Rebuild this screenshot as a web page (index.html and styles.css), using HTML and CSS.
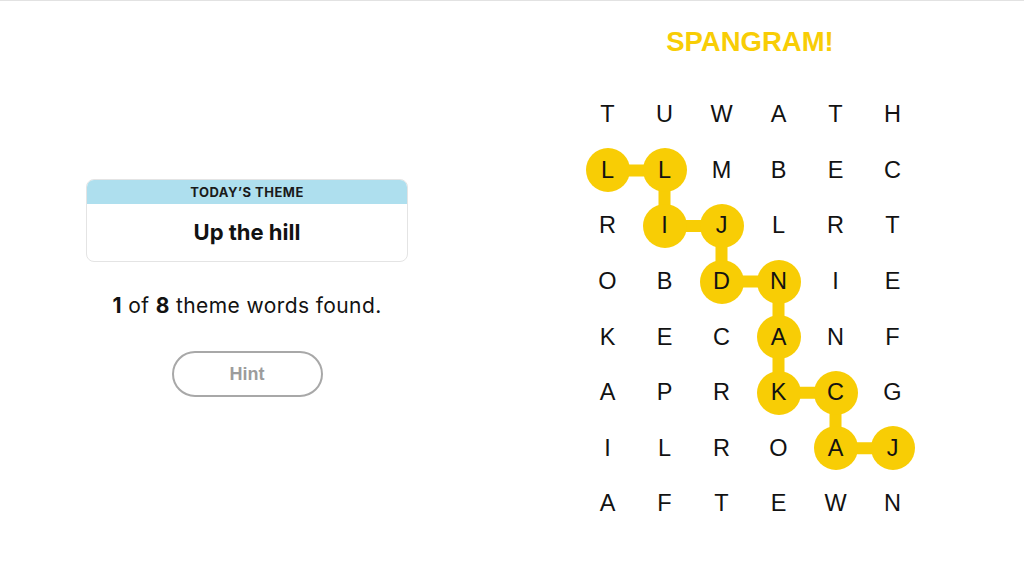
FILE: index.html
```html
<!DOCTYPE html>
<html>
<head>
<meta charset="utf-8">
<link rel="stylesheet" href="styles.css">
</head>
<body>
<div class="page">
  <section class="left">
    <div class="theme-card">
      <div class="theme-head">TODAY’S THEME</div>
      <div class="theme-body">Up the hill</div>
    </div>
    <p class="found"><b>1</b> of <b>8</b> theme words found.</p>
    <button class="hint">Hint</button>
  </section>
  <section class="right">
    <h1 class="spangram">SPANGRAM!</h1>
    <div class="board">
      <svg class="links" width="342" height="445" viewBox="0 0 342 445">
        <polyline points="28.5,83.4 85.5,83.4 85.5,139 142.5,139 142.5,194.6 199.5,194.6 199.5,305.7 256.5,305.7 256.5,361.3 313.5,361.3" fill="none" stroke="#f8cd05" stroke-width="12"/>
      </svg>
      <div class="grid">
        <span>T</span><span>U</span><span>W</span><span>A</span><span>T</span><span>H</span>
        <span class="on">L</span><span class="on">L</span><span>M</span><span>B</span><span>E</span><span>C</span>
        <span>R</span><span class="on">I</span><span class="on">J</span><span>L</span><span>R</span><span>T</span>
        <span>O</span><span>B</span><span class="on">D</span><span class="on">N</span><span>I</span><span>E</span>
        <span>K</span><span>E</span><span>C</span><span class="on">A</span><span>N</span><span>F</span>
        <span>A</span><span>P</span><span>R</span><span class="on">K</span><span class="on">C</span><span>G</span>
        <span>I</span><span>L</span><span>R</span><span>O</span><span class="on">A</span><span class="on">J</span>
        <span>A</span><span>F</span><span>T</span><span>E</span><span>W</span><span>N</span>
      </div>
    </div>
  </section>
</div>
</body>
</html>
```
FILE: styles.css
```css
html, body {
  margin: 0;
  padding: 0;
  background: #fff;
}
body {
  font-family: "Liberation Sans", Arial, sans-serif;
  color: #121212;
  width: 1024px;
  height: 576px;
  overflow: hidden;
  border-top: 1px solid #e2e2e2;
  box-sizing: border-box;
}
.page {
  display: flex;
  height: 575px;
}
.left {
  width: 494px;
  display: flex;
  flex-direction: column;
  align-items: center;
  padding-top: 178px;
  box-sizing: border-box;
}
.theme-card {
  width: 322px;
  border: 1px solid #e4e4e4;
  border-radius: 8px;
  overflow: hidden;
  box-sizing: border-box;
}
.theme-head {
  background: #aedfee;
  height: 24px;
  line-height: 25px;
  text-align: center;
  font-family: Inter, "Liberation Sans", sans-serif;
  font-size: 13px;
  font-weight: 700;
  letter-spacing: 0.5px;
  color: #1a1a1a;
}
.theme-body {
  height: 57px;
  line-height: 56px;
  text-align: center;
  font-family: Inter, "Liberation Sans", sans-serif;
  font-size: 22px;
  font-weight: 700;
  color: #121212;
}
.found {
  margin: 30px 0 0;
  font-family: Inter, "Liberation Sans", sans-serif;
  font-size: 21px;
  letter-spacing: 0.4px;
  line-height: 28px;
  color: #121212;
}
.found b { font-weight: 700; }
.hint {
  margin-top: 31px;
  width: 151px;
  height: 46px;
  border: 2px solid #a8a8a8;
  border-radius: 23px;
  background: #fff;
  font-family: "Liberation Sans", Arial, sans-serif;
  font-size: 18px;
  font-weight: bold;
  color: #9c9c9c;
  padding: 0;
}
.right {
  width: 512px;
  display: flex;
  flex-direction: column;
  align-items: center;
}
.spangram {
  margin: 25px 0 0;
  font-size: 27.5px;
  line-height: 32px;
  font-weight: bold;
  color: #f8cd05;
  letter-spacing: 0;
}
.board {
  position: relative;
  margin-top: 29px;
  width: 342px;
  height: 445px;
}
.links {
  position: absolute;
  left: 0;
  top: 0;
}
.grid {
  position: relative;
  display: grid;
  grid-template-columns: repeat(6, 57px);
  grid-template-rows: repeat(8, 55.6px);
}
.grid span {
  display: flex;
  align-items: center;
  justify-content: center;
  font-size: 23.5px;
  color: #121212;
  position: relative;
}
.grid span.on::before {
  content: "";
  position: absolute;
  left: 50%;
  top: 50%;
  width: 44px;
  height: 44px;
  margin: -22px 0 0 -22px;
  border-radius: 50%;
  background: #f8cd05;
  z-index: -1;
}
.grid span.on { z-index: 0; }
```
